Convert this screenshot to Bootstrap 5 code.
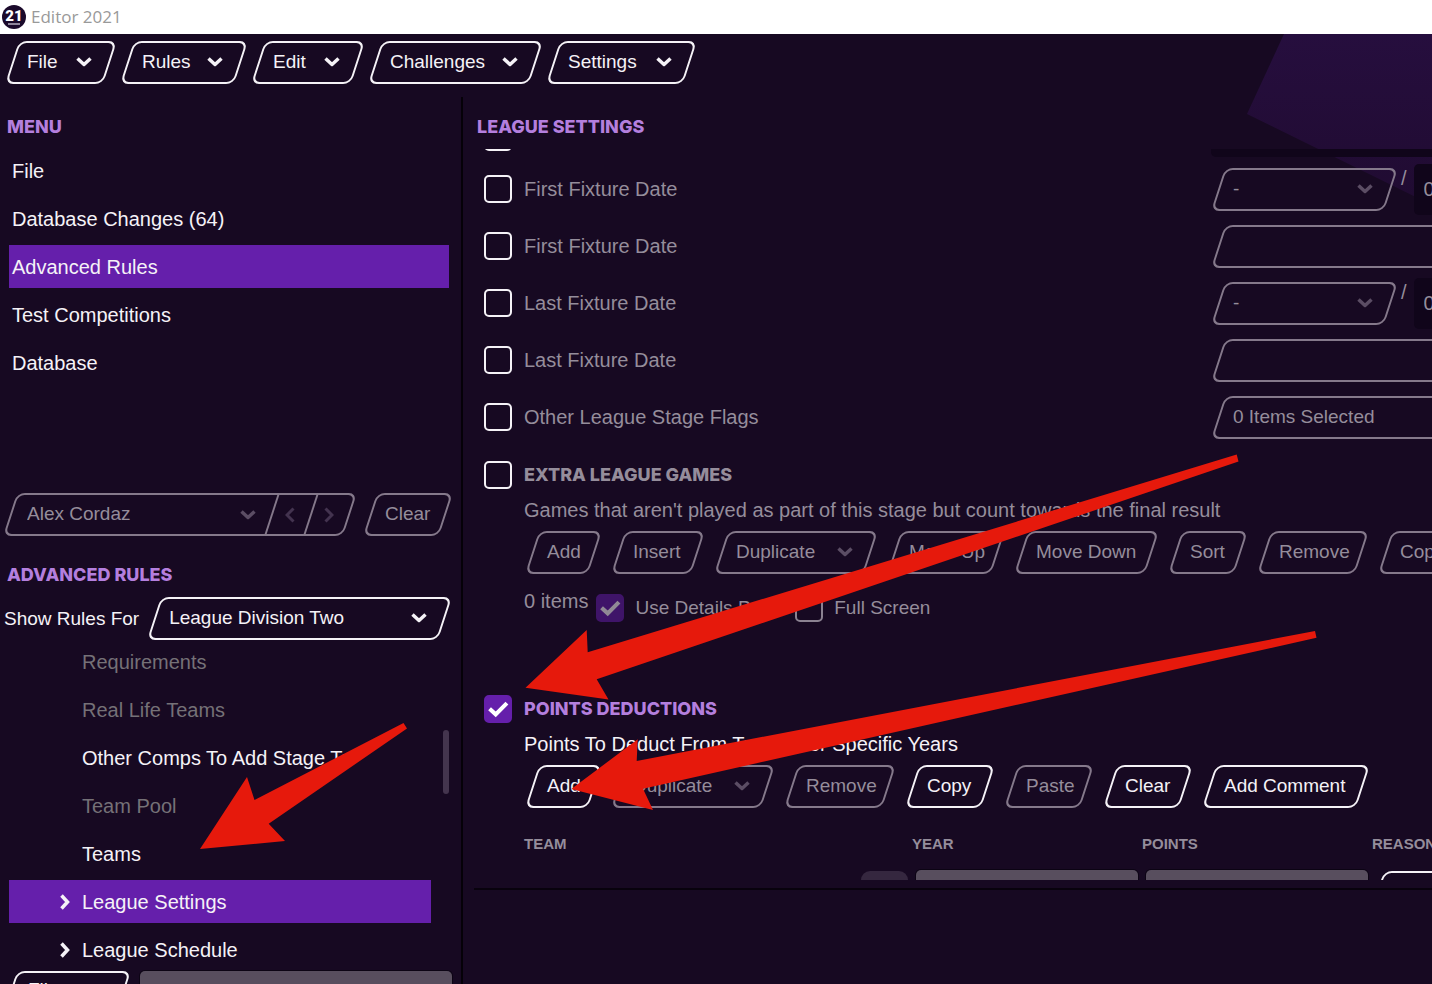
<!DOCTYPE html>
<html lang="en">
<head>
<meta charset="utf-8">
<meta name="viewport" content="width=device-width, initial-scale=1">
<title>Editor 2021</title>
<link href="https://cdn.jsdelivr.net/npm/bootstrap@5.3.0/dist/css/bootstrap.min.css" rel="stylesheet">
<script src="https://cdn.jsdelivr.net/npm/bootstrap@5.3.0/dist/js/bootstrap.bundle.min.js"></script>
<style>
  :root { --ink: #f5f2f7; --muted: #958d9b; --line-muted: #85798b; --lilac: #b47fde; --violet: #651fab; --ground: #170922; }
  body { background: var(--ground); color: var(--ink); font: 20px/24px "Liberation Sans", Arial, sans-serif; }
  svg { display: block; flex: none; }
  .titlebar { height: 34px; background: #fff; color: #999; font: 17px/34px "Open Sans", sans-serif; padding: 0 2px; gap: 5px; }
  .editor { position: relative; min-height: 0; }
  .backdrop { position: absolute; top: 0; right: 0; width: 185px; height: 171px; background: linear-gradient(#260e3e, #200b31); clip-path: polygon(37px 0, 100% 0, 100% 100%, 0 80px); }
  .toolbar { position: relative; padding: 7px 7px 13px; gap: 6px; }
  .columns { min-height: 0; }

  /* slanted outline shared by buttons and drop-downs */
  .slant { position: relative; display: flex; align-items: center; flex: none; height: 43px; padding: 0 19px 1px 20px; border: 0; background: none; color: var(--ink); font-size: 19px; line-height: 24px; white-space: nowrap; }
  .slant::before { content: ""; position: absolute; inset: 0 6px 0 5px; border: 2px solid currentColor; border-radius: 8px; transform: skewX(-18deg); pointer-events: none; }
  .slant > svg { margin-left: auto; }
  .slant.drop { padding-right: 24px; }
  .slant.off, .slant:disabled { color: var(--muted); }
  .slant.off::before, .slant:disabled::before { border-color: var(--line-muted); }
  .slant.off svg, .slant:disabled svg { color: #5b4d64; }
  .slant select { appearance: none; flex: 1; min-width: 0; border: 0; padding: 0 0 1px; background: none; color: inherit; font: inherit; opacity: 1; }
  .w-a { width: 77px; } .w-b { width: 87px; } .w-c { width: 91px; } .w-d { width: 109px; }
  .w-e { width: 115px; } .w-f { width: 125px; } .w-g { width: 142px; } .w-h { width: 148px; }
  .w-i { width: 161px; } .w-j { width: 172px; } .w-k { width: 184px; } .w-l { width: 351px; }
  .w-m { width: 165px; } .w-n { width: 74px; } .w-o { width: 111px; }

  .side { width: 463px; flex: none; border-right: 2px solid #050108; }
  .side, .detail { padding-top: 18px; min-height: 0; overflow: hidden; }
  .caption { font: 800 18px/24px Inter, sans-serif; color: var(--lilac); margin: 0; text-transform: uppercase; }
  .caption.top { margin: 0 0 10px 7px; }
  .detail .caption.top { margin-left: 14px; }
  .menu a { display: flex; align-items: center; height: 43px; margin-bottom: 5px; padding-left: 3px; color: var(--ink); text-decoration: none; }
  .menu a.active { background: var(--violet); }
  .menu { margin: 0 12px 0 9px; }
  .picker { margin: 104px 10px 0 5px; gap: 9px; }
  .picker select { padding-left: 2px; }
  .step { position: relative; display: flex; align-items: center; width: 39px; height: 43px; border: 0; padding: 0 0 0 13px; background: none; }
  .step::before { content: ""; position: absolute; inset: 0 auto 0 -1px; width: 2px; background: var(--line-muted); transform: skewX(-18deg); }
  .slant .step svg { color: #43334f; }
  .picker .w-l { padding-right: 6px; padding-bottom: 0; }
  .rules-caption { margin: 27px 0 10px 7px; }
  .rules-for { padding: 0 10px 0 4px; gap: 10px; }
  .rules-for label { font-size: 19px; }
  .tree { position: relative; height: 331px; flex: none; }
  .tree .menu { margin-right: 30px; }
  .tree .menu a { padding-left: 50px; }
  .tree .menu a span { margin-left: 23px; }
  .tree .menu a.branch span { margin-left: 10px; }
  .tree .menu a.dim { color: #757177; }
  .thumb { position: absolute; right: 12px; top: 90px; width: 6px; height: 64px; border-radius: 3px; background: #44354e; }
  .finder { padding: 0 9px 0 5px; gap: 10px; }
  .finder .slant { padding: 0 0 6px 23px; }
  .field { border: 0; background: #584e5e; border-radius: 5px; height: 43px; box-shadow: 0 0 0 1px #0c0414; min-width: 0; padding: 0 8px; color: var(--ink); }

  .detail { flex: 1; min-width: 0; }
  .scroller { flex: 1; min-height: 0; overflow: hidden; padding-left: 21px; }
  .setting { height: 43px; margin-bottom: 14px; gap: 12px; padding-bottom: 2px; }
  .setting label, .dimmed { color: var(--muted); }
  .setting label.on { color: var(--lilac); }
  .setting.head { margin-bottom: 2px; padding: 0; }
  .setting.cut { height: 8px; margin-bottom: 11px; padding: 0; align-items: flex-end; }
  .setting.cut .tick { margin-bottom: 6px; }
  .control { flex: 0 0 219px; margin: 0 0 -2px auto; min-width: 0; }
  .wide { width: 300px; }
  .dark { flex: none; border: 0; border-radius: 5px; background: #10051a; color: var(--muted); height: 51px; width: 90px; margin-left: 7px; padding: 0 10px; }
  .cut .control { margin-bottom: 0; }
  .cut .dark { display: block; height: 43px; width: 300px; margin-left: -2px; }
  .tick { appearance: none; flex: none; width: 28px; height: 28px; margin: 0; border: 2px solid var(--ink); border-radius: 5px; background: none; }
  .tick:checked { border-color: var(--violet); background: var(--violet) center / 25px 25px no-repeat url("data:image/svg+xml,%3Csvg xmlns='http://www.w3.org/2000/svg' viewBox='0 0 25 25'%3E%3Cpath d='M4 12l6 5.500L21 6.500' fill='none' stroke='%23fff' stroke-width='4'/%3E%3C/svg%3E"); }
  .tick:disabled { opacity: .52; }
  .inner { padding-left: 40px; }
  .actions { gap: 12px; margin: 9px 0 0 3px; }
  .options { height: 43px; margin: 12px 0 58px; gap: 11px; }
  .options .count { margin: 0 -3px 14px 0; }
  .options label { margin-right: 2px; font-size: 19px; }
  .deductions { table-layout: fixed; width: 100%; margin-top: 10px; }
  .deductions th { height: 51px; padding: 0; font-size: 15px; color: var(--muted); white-space: nowrap; }
  .deductions td { padding: 0; vertical-align: top; }
  .c-team { width: 388px; } .c-num { width: 230px; }
  .deductions .field { display: block; width: 222px; margin: 1px 0 0 4px; }
  .chip { width: 47px; height: 43px; margin: 2px 4px 0 auto; border: 0; border-radius: 9px; background: #35273f; display: block; }
  .reason { margin-top: 2px; }
  .base { height: 104px; flex: none; padding: 8px 0 0 11px; }
  .base hr { margin: 0; border-top: 2px solid #08020d; opacity: 1; }
  .arrows { position: absolute; top: 0; left: 0; pointer-events: none; }
</style>
</head>
<body class="vh-100 overflow-hidden d-flex flex-column position-relative">
<svg width="0" height="0" class="position-absolute" aria-hidden="true">
  <symbol id="down" viewBox="0 0 16 10"><path d="M1.500 1.500 8 7.500 14.500 1.500" fill="none" stroke="currentColor" stroke-width="3.500" stroke-linejoin="round"/></symbol>
  <symbol id="right" viewBox="0 0 10 16"><path d="M1.500 1.500 7.500 8 1.500 14.500" fill="none" stroke="currentColor" stroke-width="3.500"/></symbol>
</svg>

<header class="titlebar d-flex align-items-center flex-shrink-0">
  <svg width="24" height="24" viewBox="0 0 24 24" role="img" aria-label="21"><circle cx="12" cy="12" r="12" fill="#1b0a2b"/><text x="12" y="16" text-anchor="middle" font-family="Roboto" font-weight="900" font-size="15" fill="#fff">21</text><path d="M6 19h12" stroke="#b9b0c2" stroke-width="1.500"/></svg>
  <span>Editor 2021</span>
</header>

<div class="editor d-flex flex-column flex-grow-1">
  <div class="backdrop"></div>
  <nav class="toolbar d-flex" aria-label="Main">
    <button class="slant drop w-d">File <svg width="16" height="10"><use href="#down"/></svg></button>
    <button class="slant drop w-f">Rules <svg width="16" height="10"><use href="#down"/></svg></button>
    <button class="slant drop w-o">Edit <svg width="16" height="10"><use href="#down"/></svg></button>
    <button class="slant drop w-j">Challenges <svg width="16" height="10"><use href="#down"/></svg></button>
    <button class="slant drop w-h">Settings <svg width="16" height="10"><use href="#down"/></svg></button>
  </nav>

  <div class="columns d-flex flex-grow-1 position-relative">
    <aside class="side d-flex flex-column">
      <h2 class="caption top">Menu</h2>
      <nav class="menu" aria-label="Menu">
        <a href="#">File</a>
        <a href="#">Database Changes (64)</a>
        <a href="#" class="active">Advanced Rules</a>
        <a href="#">Test Competitions</a>
        <a href="#">Database</a>
      </nav>
      <div class="picker d-flex">
        <div class="slant off w-l">
          <select disabled aria-label="Person"><option>Alex Cordaz</option></select>
          <svg class="me-3" width="16" height="10"><use href="#down"/></svg>
          <button class="step" disabled aria-label="Previous"><svg width="10" height="16" viewBox="0 0 10 16"><path d="M8.500 1.500 2 8l6.500 6.500" fill="none" stroke="currentColor" stroke-width="3"/></svg></button>
          <button class="step" disabled aria-label="Next"><svg width="10" height="16" viewBox="0 0 10 16"><path d="M1.500 1.500 8 8l-6.500 6.500" fill="none" stroke="currentColor" stroke-width="3"/></svg></button>
        </div>
        <button class="slant off w-b">Clear</button>
      </div>
      <h2 class="caption rules-caption">Advanced Rules</h2>
      <div class="rules-for d-flex align-items-center">
        <label for="rules-for" class="flex-shrink-0">Show Rules For</label>
        <div class="slant drop flex-fill"><select id="rules-for"><option>League Division Two</option></select><svg width="16" height="10"><use href="#down"/></svg></div>
      </div>
      <div class="tree">
        <nav class="menu" aria-label="Rules">
          <a href="#" class="dim"><span>Requirements</span></a>
          <a href="#" class="dim"><span>Real Life Teams</span></a>
          <a href="#"><span>Other Comps To Add Stage To</span></a>
          <a href="#" class="dim"><span>Team Pool</span></a>
          <a href="#"><span>Teams</span></a>
          <a href="#" class="branch active"><svg width="13" height="16" viewBox="-1 0 13 16"><use href="#right" width="10" height="16"/></svg><span>League Settings</span></a>
          <a href="#" class="branch"><svg width="13" height="16" viewBox="-1 0 13 16"><use href="#right" width="10" height="16"/></svg><span>League Schedule</span></a>
        </nav>
        <div class="thumb"></div>
      </div>
      <div class="finder d-flex">
        <button class="slant w-f">Filter</button>
        <input class="field flex-fill" type="text" aria-label="Search">
      </div>
    </aside>

    <main class="detail d-flex flex-column">
      <h2 class="caption top">League Settings</h2>
      <div class="scroller">
        <div class="setting cut d-flex"><input class="tick" type="checkbox" aria-label="Previous setting"><div class="control"><input class="dark" type="text" disabled aria-label="Value"></div></div>
        <div class="setting d-flex align-items-center"><input class="tick" type="checkbox" id="s1"><label for="s1">First Fixture Date</label>
          <div class="control d-flex align-items-center"><div class="slant off drop w-k"><select disabled aria-label="Day"><option>-</option></select><svg width="16" height="10"><use href="#down"/></svg></div><span class="dimmed mb-4 ms-1">/</span><input class="dark" type="text" value="0" disabled aria-label="Month"></div></div>
        <div class="setting d-flex align-items-center"><input class="tick" type="checkbox" id="s2"><label for="s2">First Fixture Date</label>
          <div class="control"><div class="slant off wide"><select disabled aria-label="First date"><option></option></select></div></div></div>
        <div class="setting d-flex align-items-center"><input class="tick" type="checkbox" id="s3"><label for="s3">Last Fixture Date</label>
          <div class="control d-flex align-items-center"><div class="slant off drop w-k"><select disabled aria-label="Day"><option>-</option></select><svg width="16" height="10"><use href="#down"/></svg></div><span class="dimmed mb-4 ms-1">/</span><input class="dark" type="text" value="0" disabled aria-label="Month"></div></div>
        <div class="setting d-flex align-items-center"><input class="tick" type="checkbox" id="s4"><label for="s4">Last Fixture Date</label>
          <div class="control"><div class="slant off wide"><select disabled aria-label="Last date"><option></option></select></div></div></div>
        <div class="setting d-flex align-items-center"><input class="tick" type="checkbox" id="s5"><label for="s5">Other League Stage Flags</label>
          <div class="control"><div class="slant off wide"><select disabled aria-label="Flags"><option>0 Items Selected</option></select></div></div></div>

        <div class="setting head d-flex align-items-center"><input class="tick" type="checkbox" id="s6"><label for="s6" class="caption">Extra League Games</label></div>
        <div class="inner">
          <div class="dimmed text-nowrap">Games that aren't played as part of this stage but count towards the final result</div>
          <div class="actions d-flex">
            <button class="slant w-n" disabled>Add</button>
            <button class="slant w-c" disabled>Insert</button>
            <button class="slant drop w-i" disabled>Duplicate <svg width="16" height="10"><use href="#down"/></svg></button>
            <button class="slant w-e" disabled>Move Up</button>
            <button class="slant w-g" disabled>Move Down</button>
            <button class="slant w-a" disabled>Sort</button>
            <button class="slant w-d" disabled>Remove</button>
            <button class="slant w-b" disabled>Copy</button>
          </div>
          <div class="options dimmed d-flex align-items-center">
            <span class="count">0 items</span>
            <input class="tick" type="checkbox" id="pane" checked disabled><label for="pane">Use Details Pane</label>
            <input class="tick" type="checkbox" id="full" disabled><label for="full">Full Screen</label>
          </div>
        </div>

        <div class="setting head d-flex align-items-center"><input class="tick" type="checkbox" id="s7" checked><label for="s7" class="caption on">Points Deductions</label></div>
        <div class="inner">
          <div class="text-nowrap">Points To Deduct From Teams For Specific Years</div>
          <div class="actions d-flex">
            <button class="slant w-n">Add</button>
            <button class="slant drop w-i" disabled>Duplicate <svg width="16" height="10"><use href="#down"/></svg></button>
            <button class="slant w-d" disabled>Remove</button>
            <button class="slant w-b">Copy</button>
            <button class="slant w-b" disabled>Paste</button>
            <button class="slant w-b">Clear</button>
            <button class="slant w-m">Add Comment</button>
          </div>
          <table class="deductions">
            <colgroup><col class="c-team"><col class="c-num"><col class="c-num"><col></colgroup>
            <thead><tr><th>TEAM</th><th>YEAR</th><th>POINTS</th><th>REASON</th></tr></thead>
            <tbody><tr>
              <td><button class="chip" aria-label="Clear team"></button></td>
              <td><input class="field" type="text" aria-label="Year"></td>
              <td><input class="field" type="text" aria-label="Points"></td>
              <td><button class="slant wide reason" aria-label="Reason"></button></td>
            </tr></tbody>
          </table>
        </div>
      </div>
      <div class="base"><hr></div>
    </main>
  </div>
</div>

<svg class="arrows" width="1432" height="984" viewBox="0 0 1432 984" fill="#e6190c" aria-hidden="true">
  <path d="M200 849 247 777 254.500 800 403.500 723 407 728.500 268.700 823.700 285 841Z"/>
  <path d="M525.500 687.700 586.700 630 587.700 652.300 1236.700 454.500 1238.500 461.500 596.700 679.300 608.500 699.500Z"/>
  <path d="M571.300 789 637.700 739.300 636.700 761 1315 631 1316.500 637.700 643 788.700 653 810Z"/>
</svg>
</body>
</html>
